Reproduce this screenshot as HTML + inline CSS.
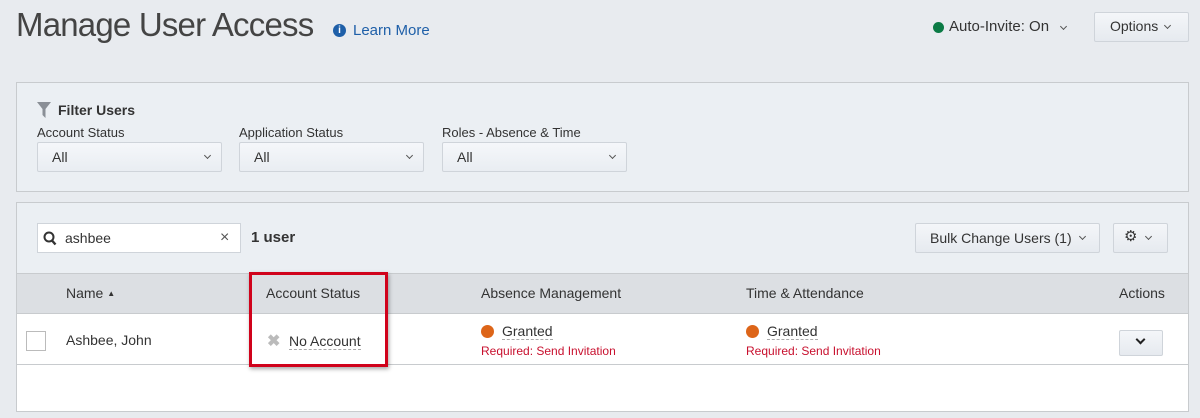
<!DOCTYPE html>
<html><head><meta charset="utf-8"><style>
*{box-sizing:border-box;margin:0;padding:0}
body{width:1200px;height:418px;background:#e8ebef;font-family:"Liberation Sans",sans-serif;color:#333;position:relative;overflow:hidden;font-size:13px}
.a{position:absolute;white-space:nowrap}
.sel{position:absolute;height:30px;background:linear-gradient(#f5f7fa,#e9edf2);border:1px solid #cfd4da;border-radius:2px;padding:6px 14px;font-size:14px}
.chev{position:absolute;width:6px;height:6px;border-right:1.3px solid #555;border-bottom:1.3px solid #555;transform:rotate(45deg)}
.btn{position:absolute;background:linear-gradient(#f4f6f9,#e6eaef);border:1px solid #cfd4da;border-radius:2px;font-size:14px}
.dash{border-bottom:1px dashed #aaa}
.red{color:#c8102e;font-size:12px}
.dot{display:inline-block;width:13px;height:13px;border-radius:50%;background:#dd6519;vertical-align:-2px;margin-right:8px}
</style></head><body>
<div class="a" style="left:16px;top:6px;font-size:33px;font-weight:300;color:#444;letter-spacing:-0.8px">Manage User Access</div>
<div class="a" style="left:333px;top:24px;width:13px;height:13px;border-radius:50%;background:#1e5fa8;color:#fff;font-size:10px;font-weight:bold;text-align:center;line-height:13px">i</div>
<div class="a" style="left:353px;top:22px;font-size:15px;color:#1e5fa8">Learn More</div>
<div class="a" style="left:933px;top:22px;width:11px;height:11px;border-radius:50%;background:#0b7a45"></div>
<div class="a" style="left:949px;top:18px;font-size:15px">Auto-Invite: On</div>
<div class="chev" style="left:1061px;top:24px;width:5px;height:5px"></div>
<div class="btn" style="left:1094px;top:12px;width:95px;height:30px;padding:5px 0 0 15px">Options</div>
<div class="chev" style="left:1165px;top:23px;width:5px;height:5px"></div>

<div class="a" style="left:16px;top:82px;width:1173px;height:110px;background:#ebeff3;border:1px solid #c8cbce"></div>
<svg class="a" style="left:37px;top:102px" width="14" height="16" viewBox="0 0 14 16"><path d="M0 0H14L8.5 7V16L5.5 13V7Z" fill="#8a8f96"/></svg>
<div class="a" style="left:58px;top:102px;font-size:14px;font-weight:bold">Filter Users</div>
<div class="a" style="left:37px;top:125px">Account Status</div>
<div class="a" style="left:239px;top:125px">Application Status</div>
<div class="a" style="left:442px;top:125px">Roles - Absence &amp; Time</div>
<div class="sel" style="left:37px;top:142px;width:185px">All</div><div class="chev" style="left:205px;top:153px;width:5px;height:5px"></div>
<div class="sel" style="left:239px;top:142px;width:185px">All</div><div class="chev" style="left:407px;top:153px;width:5px;height:5px"></div>
<div class="sel" style="left:442px;top:142px;width:185px">All</div><div class="chev" style="left:610px;top:153px;width:5px;height:5px"></div>

<div class="a" style="left:16px;top:202px;width:1173px;height:210px;background:#ebeff3;border:1px solid #c8cbce"></div>
<div class="a" style="left:37px;top:223px;width:204px;height:30px;background:#fff;border:1px solid #cfd4da"></div>
<svg class="a" style="left:43px;top:231px" width="14" height="15" viewBox="0 0 14 15"><circle cx="6" cy="6" r="4.5" fill="none" stroke="#333" stroke-width="2"/><path d="M9 9.5L12.5 13.5" stroke="#333" stroke-width="2.4"/></svg>
<div class="a" style="left:65px;top:230px;font-size:14px">ashbee</div>
<div class="a" style="left:220px;top:229px;font-size:16px;color:#555">×</div>
<div class="a" style="left:251px;top:229px;font-size:15px;font-weight:bold">1 user</div>
<div class="btn" style="left:915px;top:223px;width:185px;height:30px;padding:6px 0 0 14px">Bulk Change Users (1)</div>
<div class="chev" style="left:1080px;top:234px;width:5px;height:5px"></div>
<div class="btn" style="left:1113px;top:223px;width:55px;height:30px"></div>
<div class="a" style="left:1124px;top:227px;font-size:15px">⚙</div>
<div class="chev" style="left:1146px;top:234px;width:5px;height:5px"></div>

<div class="a" style="left:17px;top:273px;width:1171px;height:41px;background:#dcdfe3;border-top:1px solid #c8cbce;border-bottom:1px solid #c8cbce"></div>
<div class="a" style="left:66px;top:285px;font-size:14px">Name <span style="font-size:8px;vertical-align:2px">▲</span></div>
<div class="a" style="left:266px;top:285px;font-size:14px">Account Status</div>
<div class="a" style="left:481px;top:285px;font-size:14px">Absence Management</div>
<div class="a" style="left:746px;top:285px;font-size:14px">Time &amp; Attendance</div>
<div class="a" style="left:1119px;top:285px;font-size:14px">Actions</div>

<div class="a" style="left:17px;top:314px;width:1171px;height:97px;background:#fff"></div>
<div class="a" style="left:17px;top:364px;width:1171px;height:1px;background:#c8cbce"></div>
<div class="a" style="left:26px;top:331px;width:20px;height:20px;border:1px solid #bbb;background:#fff"></div>
<div class="a" style="left:66px;top:332px;font-size:14px">Ashbee, John</div>
<div class="a" style="left:267px;top:331px;font-size:16px;color:#bbb;font-weight:bold">✖</div>
<div class="a dash" style="left:289px;top:333px;font-size:14px">No Account</div>
<div class="a" style="left:481px;top:323px;font-size:14px"><span class="dot"></span><span class="dash">Granted</span></div>
<div class="a red" style="left:481px;top:344px">Required: Send Invitation</div>
<div class="a" style="left:746px;top:323px;font-size:14px"><span class="dot"></span><span class="dash">Granted</span></div>
<div class="a red" style="left:746px;top:344px">Required: Send Invitation</div>
<div class="btn" style="left:1119px;top:330px;width:44px;height:26px"></div>
<div class="chev" style="left:1137px;top:336px;width:7px;height:7px;border-width:2.5px;border-color:#222"></div>

<div class="a" style="left:249px;top:272px;width:139px;height:95px;border:3px solid #d0021b;box-shadow:1px 2px 4px rgba(0,0,0,.35)"></div>
</body></html>
